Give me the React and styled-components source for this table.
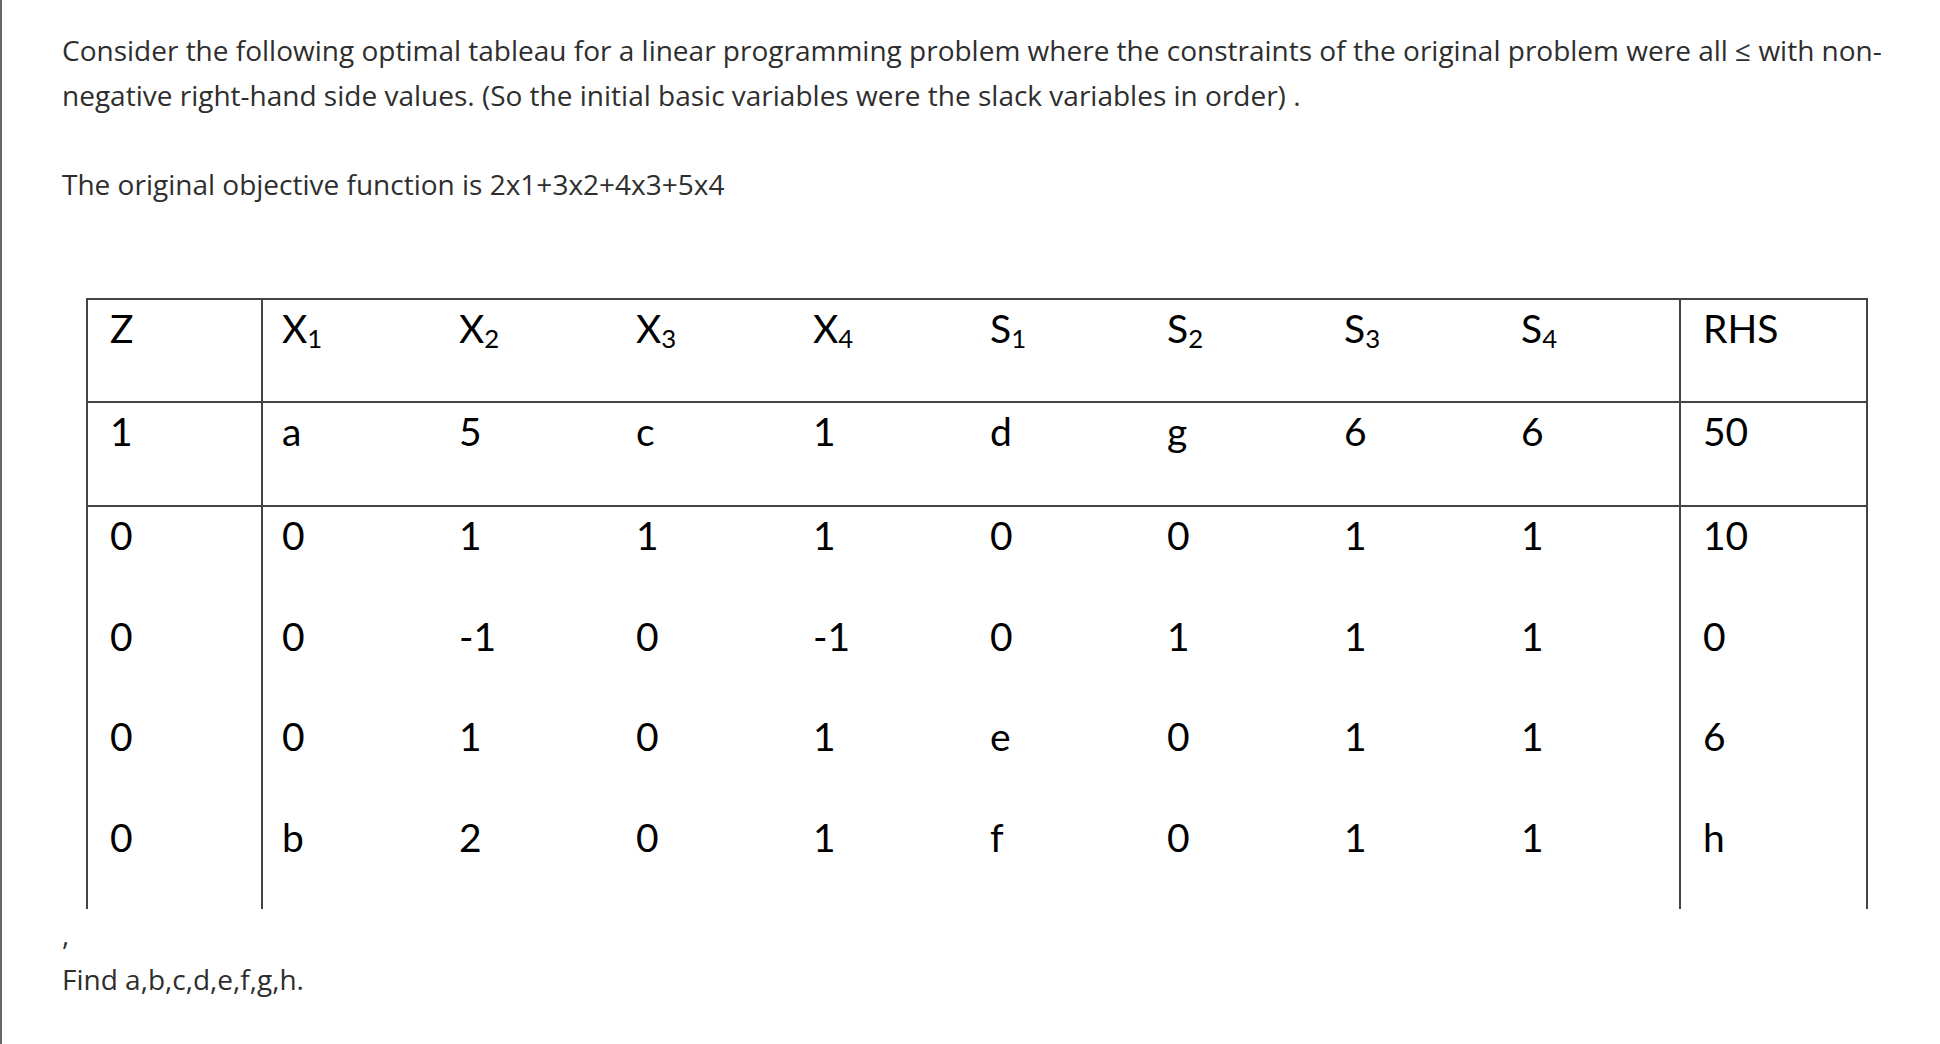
import React from "react";
import styled, { createGlobalStyle } from "styled-components";

const GlobalStyle = createGlobalStyle`
  html, body {
    margin: 0;
    padding: 0;
    background: #fff;
  }
  body {
    font-family: "Open Sans", sans-serif;
  }
`;

const header = ["Z", ["X", 1], ["X", 2], ["X", 3], ["X", 4], ["S", 1], ["S", 2], ["S", 3], ["S", 4], "RHS"];

const rows = [
  ["1", "a", "5", "c", "1", "d", "g", "6", "6", "50"],
  ["0", "0", "1", "1", "1", "0", "0", "1", "1", "10"],
  ["0", "0", "-1", "0", "-1", "0", "1", "1", "1", "0"],
  ["0", "0", "1", "0", "1", "e", "0", "1", "1", "6"],
  ["0", "b", "2", "0", "1", "f", "0", "1", "1", "h"],
];

const App = () => {
  const cellKind = (i) => (i === 0 ? "basis" : i === 9 ? "rhs" : "var");
  return (
    <>
      <GlobalStyle />
      <Page>
        <Para>
          Consider the following optimal tableau for a linear programming problem where the
          constraints of the original problem were all ≤ with non-negative right-hand side values.
          (So the initial basic variables were the slack variables in order) .
        </Para>
        <Para $last>The original objective function is 2x1+3x2+4x3+5x4</Para>

        <Tableau>
          <Row $h={103} $ruled>
            {header.map((h, i) => (
              <Cell key={i} $kind={cellKind(i)}>
                {Array.isArray(h) ? (
                  <>
                    {h[0]}
                    <Sub>{h[1]}</Sub>
                  </>
                ) : (
                  h
                )}
              </Cell>
            ))}
          </Row>
          {rows.map((r, ri) => (
            <Row key={ri} $h={ri === 0 ? 104 : 100.5} $ruled={ri === 0}>
              {r.map((v, i) => (
                <Cell key={i} $kind={cellKind(i)}>
                  {v}
                </Cell>
              ))}
            </Row>
          ))}
        </Tableau>

        <Para $tight>,</Para>
        <Para>Find a,b,c,d,e,f,g,h.</Para>
      </Page>
    </>
  );
};

const Page = styled.div`
  box-sizing: border-box;
  min-height: 1044px;
  border-left: 2px solid #666;
  padding: 28px 40px 0 60px;
  color: #2e2e2e;
  font-size: 28px;
  line-height: 44.5px;
`;

const Para = styled.p`
  margin: 0 0 ${(p) => (p.$last || p.$tight ? 0 : 44.5)}px;
`;

const Tableau = styled.div`
  width: fit-content;
  margin: 92px 0 3px 24px;
  border: 2px solid #444;
  border-bottom: none;
  font-family: Lato, "Liberation Sans", sans-serif;
  color: #000;
`;

const Row = styled.div`
  display: grid;
  grid-template-columns: 175px repeat(8, 177px) 187px;
  height: ${(p) => p.$h}px;
  box-sizing: border-box;
  border-bottom: ${(p) => (p.$ruled ? "2px solid #444" : "none")};
`;

const Cell = styled.div`
  box-sizing: border-box;
  padding: 5px 0 0 ${(p) => (p.$kind === "var" ? 19 : 22)}px;
  font-size: 39px;
  line-height: 46px;
  border-right: ${(p) => (p.$kind === "basis" ? "2px solid #444" : "none")};
  border-left: ${(p) => (p.$kind === "rhs" ? "2px solid #444" : "none")};
`;

const Sub = styled.span`
  font-size: 0.66em;
  position: relative;
  top: 0.2em;
`;

export default App;
